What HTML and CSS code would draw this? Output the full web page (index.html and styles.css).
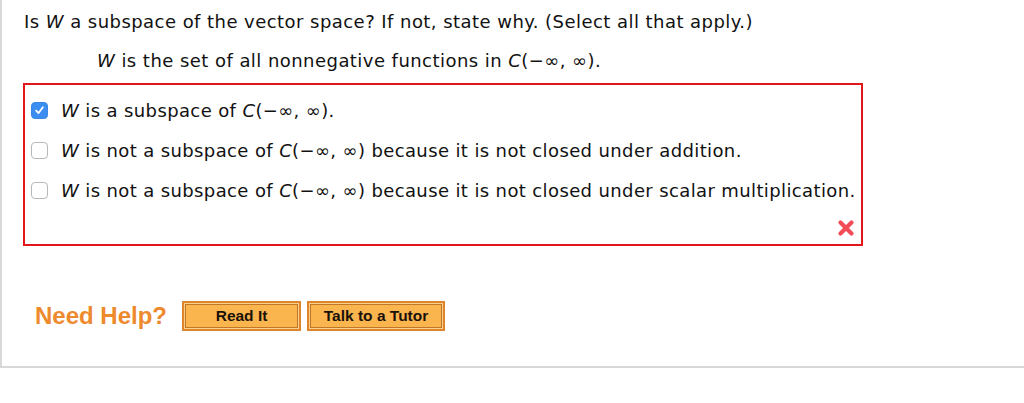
FILE: index.html
```html
<!DOCTYPE html>
<html>
<head>
<meta charset="utf-8">
<link rel="stylesheet" href="styles.css">
</head>
<body>
<div class="panel">
  <p class="question">Is <i>W</i> a subspace of the vector space? If not, state why. (Select all that apply.)</p>
  <p class="given"><i>W</i> is the set of all nonnegative functions in <i>C</i>(−∞, ∞).</p>
  <div class="answers">
    <label class="option">
      <span class="box checked"><svg viewBox="0 0 16 16" width="16" height="16"><path d="M4.4 8.6 L7 11.2 L11.6 5" fill="none" stroke="#fff" stroke-width="1.9" stroke-linecap="round" stroke-linejoin="round"/></svg></span>
      <span class="txt"><i>W</i> is a subspace of <i>C</i>(−∞, ∞).</span>
    </label>
    <label class="option">
      <span class="box"></span>
      <span class="txt"><i>W</i> is not a subspace of <i>C</i>(−∞, ∞) because it is not closed under addition.</span>
    </label>
    <label class="option">
      <span class="box"></span>
      <span class="txt"><i>W</i> is not a subspace of <i>C</i>(−∞, ∞) because it is not closed under scalar multiplication.</span>
    </label>
    <div class="mark">
      <svg viewBox="0 0 18 18" width="18" height="18"><path d="M3.5 3.5 L14.5 14.5 M14.5 3.5 L3.5 14.5" stroke="#f24c57" stroke-width="4.2" stroke-linecap="round"/></svg>
    </div>
  </div>
  <div class="help">
    <span class="need">Need Help?</span>
    <button class="btn read">Read It</button>
    <button class="btn tutor">Talk to a Tutor</button>
  </div>
</div>
</body>
</html>
```
FILE: styles.css
```css
html, body {
  margin: 0;
  padding: 0;
  background: #fff;
}
body {
  font-family: "DejaVu Sans", Verdana, sans-serif;
  color: #111;
}
.panel {
  border-left: 2px solid #d8d8d8;
  border-bottom: 2px solid #d8d8d8;
  height: 368px;
  box-sizing: border-box;
  padding: 10px 0 0 21px;
}
.question {
  margin: 0 0 0 1px;
  font-size: 18px;
  letter-spacing: 0.45px;
  line-height: 24px;
  white-space: nowrap;
}
.given {
  margin: 15px 0 0 74px;
  font-size: 18px;
  letter-spacing: 0.45px;
  line-height: 24px;
  white-space: nowrap;
}
.answers {
  margin-top: 10px;
  width: 840px;
  height: 163px;
  border: 2px solid #e3161c;
  box-sizing: border-box;
  padding: 5px 0 0 6px;
  position: relative;
}
.option {
  display: flex;
  align-items: center;
  height: 40px;
  font-size: 18px;
  letter-spacing: 0.38px;
  white-space: nowrap;
}
.box {
  width: 17px;
  height: 17px;
  border: 1px solid #b8b8b8;
  border-radius: 4px;
  box-sizing: border-box;
  margin-right: 13px;
  display: flex;
  align-items: center;
  justify-content: center;
  background: #fff;
  flex: none;
}
.box.checked {
  background: #3b8ef0;
  border-color: #3a87e6;
}
.box svg { width: 16px; height: 16px; }
.mark {
  position: absolute;
  right: 6px;
  bottom: 7px;
  width: 18px;
  height: 18px;
}
.help {
  display: flex;
  align-items: center;
  margin-top: 55px;
  padding-left: 12px;
}
.need {
  font-family: "Liberation Sans", Arial, sans-serif;
  font-weight: bold;
  font-size: 24px;
  color: #ee8a2e;
  margin-right: 15px;
}
.btn {
  font-family: "Liberation Sans", Arial, sans-serif;
  font-weight: bold;
  font-size: 15.5px;
  color: #1a1208;
  background: #fbb54f;
  border: 2px solid #de8530;
  box-shadow: inset 0 0 0 1px #f9cf8a, inset 0 0 0 2px #c07828;
  height: 30px;
  padding: 0;
  margin-right: 6px;
}
.btn.read { width: 119px; }
.btn.tutor { width: 138px; }
```
